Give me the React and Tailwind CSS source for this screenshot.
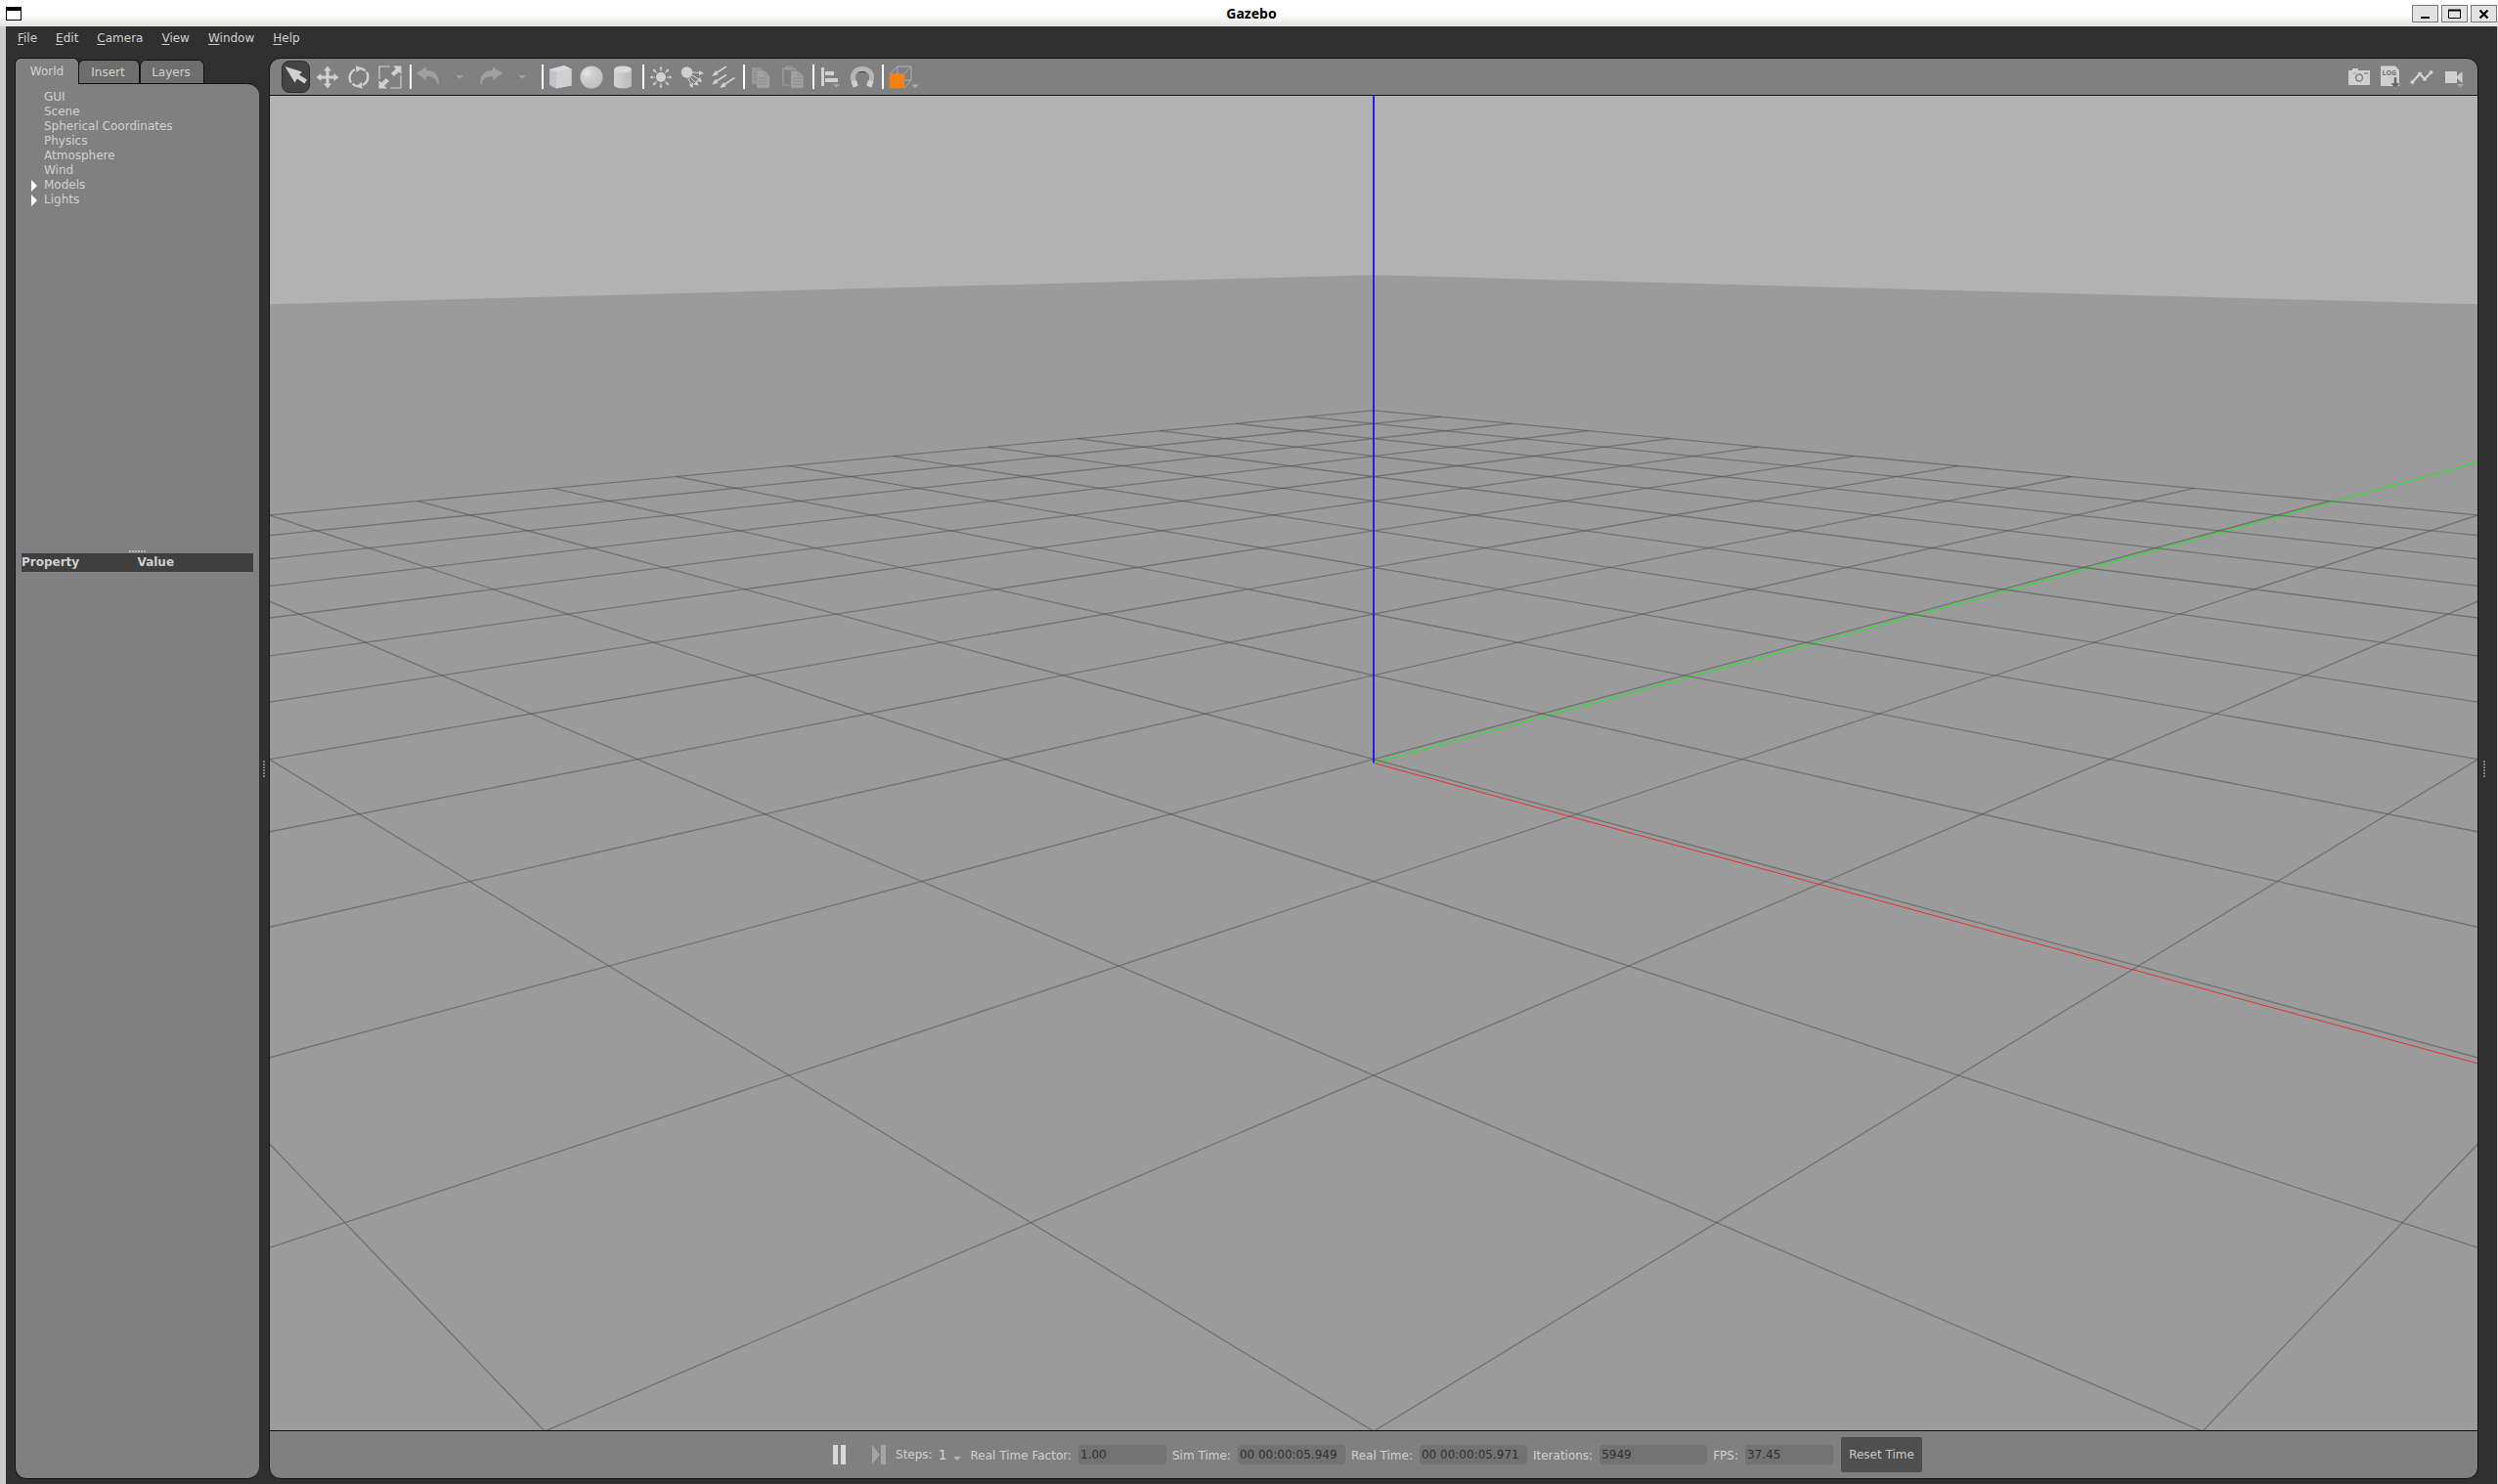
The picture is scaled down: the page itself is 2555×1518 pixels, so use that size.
import React from "react";

const W = 2258;
const H = 1365;
const EYE = { x: 5, y: -5, z: 2 };
const PITCH = 0.275643;
const FOCAL = W / 2 / Math.tan(Math.PI / 6);
const NEAR = 0.5;

function toCamera([x, y, z]) {
  const dx = x - EYE.x;
  const dy = y - EYE.y;
  const dz = z - EYE.z;
  const ahead = (-dx + dy) / Math.SQRT2;
  const right = (dx + dy) / Math.SQRT2;
  return {
    depth: ahead * Math.cos(PITCH) - dz * Math.sin(PITCH),
    right,
    up: ahead * Math.sin(PITCH) + dz * Math.cos(PITCH),
  };
}

function mix(a, b) {
  const t = (NEAR - a.depth) / (b.depth - a.depth);
  return {
    depth: NEAR,
    right: a.right + t * (b.right - a.right),
    up: a.up + t * (b.up - a.up),
  };
}

function projectLine(from, to) {
  let a = toCamera(from);
  let b = toCamera(to);
  if (a.depth < NEAR && b.depth < NEAR) return null;
  if (a.depth < NEAR) a = mix(a, b);
  else if (b.depth < NEAR) b = mix(b, a);
  const sx = (p) => W / 2 + (FOCAL * p.right) / p.depth;
  const sy = (p) => H / 2 - (FOCAL * p.up) / p.depth;
  return { x1: sx(a), y1: sy(a), x2: sx(b), y2: sy(b) };
}

const GRID = [];
for (let i = -10; i <= 10; i++) {
  GRID.push(projectLine([i, -10, 0.015], [i, 10, 0.015]));
  GRID.push(projectLine([-10, i, 0.015], [10, i, 0.015]));
}
const LINES = GRID.filter(Boolean);
const AXIS_X = projectLine([0, 0, 0], [50, 0, 0]);
const AXIS_Y = projectLine([0, 0, 0], [0, 50, 0]);
const EDGE_R = projectLine([-50, 50, 0], [50, 50, 0]);
const EDGE_L = projectLine([-50, 50, 0], [-50, -50, 0]);

function Scene() {
  return (
    <svg
      className="block h-full w-full"
      viewBox={`0 0 ${W} ${H}`}
      preserveAspectRatio="xMidYMid slice"
      role="img"
      aria-label="3D scene"
    >
      <rect width={W} height={H} fill="#b2b2b2" />
      <polygon
        fill="#9b9b9b"
        points={`${EDGE_R.x1},${EDGE_R.y1} ${EDGE_R.x2},${EDGE_R.y2} ${EDGE_R.x2},3000 ${EDGE_L.x2},3000 ${EDGE_L.x2},${EDGE_L.y2}`}
      />
      <line {...AXIS_X} stroke="#e83030" strokeWidth="1" />
      <line {...AXIS_Y} stroke="#20ea20" strokeWidth="1" />
      <g stroke="#4d4d4d" strokeOpacity="0.52" strokeWidth="1.3">
        {LINES.map((l, i) => (
          <line key={i} {...l} />
        ))}
      </g>
      <line x1={W / 2} y1="0" x2={W / 2} y2={H / 2} stroke="#2020ea" strokeWidth="2" />
    </svg>
  );
}

function Icon({ children, size = 24 }) {
  return (
    <svg width={size} height={size} viewBox="0 0 24 24" className="block shrink-0" aria-hidden="true">
      {children}
    </svg>
  );
}

function Tool({ label, children, disabled, active }) {
  return (
    <button
      type="button"
      aria-label={label}
      disabled={disabled}
      className={
        active
          ? "flex h-[33px] w-[29px] items-center justify-center rounded-lg border border-[#2c2c2c] bg-[#444444]"
          : "flex h-8 w-8 items-center justify-center"
      }
    >
      {children}
    </button>
  );
}

function Separator() {
  return <div className="mr-px ml-1 h-[25px] w-0.5 bg-white" />;
}

const L = "#d0d0d0";

function SelectIcon() {
  return (
    <Icon>
      <path d="M0.500 1L18 6.500L15 9.500L23 14.500L20.500 18.500L13 13.500L10.500 17.500Z" fill={L} />
    </Icon>
  );
}
function MoveIcon() {
  return (
    <Icon>
      <path
        d="M12 0.500L16 5.500H13.500V10.500H18.500V8L23.500 12L18.500 16V13.500H13.500V18.500H16L12 23.500L8 18.500H10.500V13.500H5.500V16L0.500 12L5.500 8V10.500H10.500V5.500H8Z"
        fill={L}
      />
    </Icon>
  );
}
function RotateIcon() {
  return (
    <Icon>
      <g fill="none" stroke={L} strokeWidth="2.200">
        <path d="M16 20A9.500 9.500 0 0 0 20 6.500" />
        <path d="M8 4A9.500 9.500 0 0 0 4 17.500" />
        <path d="M5.500 18.500A9.500 9.500 0 0 0 13 21.300" />
        <path d="M18.500 5.500A9.500 9.500 0 0 0 11 2.700" />
      </g>
      <path d="M9 0L15 3L9.500 7ZM15 17L15.500 24L9.500 21Z" fill={L} />
    </Icon>
  );
}
function ScaleIcon() {
  return (
    <Icon>
      <path d="M12 1H1V14M12 23H23V10" fill="none" stroke={L} strokeWidth="1.200" />
      <path
        d="M23.500 0.500V9L20.800 6.500L16 11L13 8L18 3.200L15 0.500ZM0.500 23.500V15L3.200 17.500L8 13L11 16L6 20.800L9 23.500Z"
        fill={L}
      />
    </Icon>
  );
}
function UndoIcon() {
  return (
    <Icon>
      <path d="M0 8L10 1.500V5C19 5 25 12 22 21C21 14 17 11 10 11V15Z" fill="#a0a0a0" />
    </Icon>
  );
}
function RedoIcon() {
  return (
    <Icon>
      <path d="M24 8L14 1.500V5C5 5 -1 12 2 21C3 14 7 11 14 11V15Z" fill="#a0a0a0" />
    </Icon>
  );
}
function Caret({ color = "#a0a0a0" }) {
  return (
    <svg width="8" height="4" viewBox="0 0 8 4" className="block" aria-hidden="true">
      <path d="M0 0H8L4 4Z" fill={color} />
    </svg>
  );
}
function BoxIcon() {
  return (
    <Icon>
      <path d="M1 4L16 0L23.500 3.500V20.500L8 23.500L1 20Z" fill="#c4c4c6" />
      <path d="M1 4L16 0L23.500 3.500L8 6.500Z" fill="#dadadb" />
      <path d="M8 6.500L23.500 3.500V20.500L8 23.500Z" fill="#cfcfd1" />
    </Icon>
  );
}
function SphereIcon() {
  return (
    <Icon>
      <defs>
        <radialGradient id="ball" cx="0.3" cy="0.3" r="0.8">
          <stop offset="0" stopColor="#e6e6e6" />
          <stop offset="0.35" stopColor="#cfcfcf" />
          <stop offset="1" stopColor="#bcbcbc" />
        </radialGradient>
      </defs>
      <circle cx="12" cy="12" r="11.500" fill="url(#ball)" />
    </Icon>
  );
}
function CylinderIcon() {
  return (
    <Icon>
      <defs>
        <linearGradient id="cyl">
          <stop offset="0" stopColor="#d4d4d4" />
          <stop offset="1" stopColor="#b9b9b9" />
        </linearGradient>
      </defs>
      <path d="M3 4V20C3 24.500 21 24.500 21 20V4Z" fill="url(#cyl)" />
      <ellipse cx="12" cy="4" rx="9" ry="3.500" fill="#dadadc" />
    </Icon>
  );
}
function PointLightIcon() {
  return (
    <Icon>
      <circle cx="12" cy="12" r="5" fill={L} />
      {[0, 45, 90, 135, 180, 225, 270, 315].map((a) => (
        <g key={a} transform={`rotate(${a} 12 12)`}>
          <path d="M12 6V3" stroke={L} strokeWidth="1" />
          <path d="M10.300 3.500H13.700L12 0.500Z" fill={L} />
        </g>
      ))}
    </Icon>
  );
}
function SpotLightIcon() {
  return (
    <Icon>
      <circle cx="6.500" cy="7" r="5.800" fill={L} />
      <path d="M10 7L20 7.500M10 9L19 14M9 11L16 18M7 11L11 20" stroke={L} strokeWidth="1" />
      <path d="M19 5L24 8L19 10ZM20 12L22 17L16.500 16ZM16.500 15.500L18.500 20.500L13.500 19.500ZM13 17.500L12.500 23L8.500 20Z" fill={L} />
    </Icon>
  );
}
function SunLightIcon() {
  return (
    <Icon>
      <path d="M15 1L4 8M15 9.500L4 16.500M23.500 12.500L12 20" stroke={L} strokeWidth="1.600" />
      <path d="M4 5L6.500 9.500L0 11ZM4 13.500L6.500 18L0 19.500ZM12 17L14.500 21.500L8 23Z" fill={L} />
    </Icon>
  );
}
function CopyIcon() {
  return (
    <Icon>
      <path d="M2 2H10L14 6V19H2Z" fill="#999999" />
      <path d="M4 8H8M4 11H8M4 14H8" stroke="#858585" />
      <path d="M7 5H15L20 10V23H7Z" fill="#a2a2a2" stroke="#8d8d8d" strokeWidth="0.600" />
      <path d="M15 5V10H20M9 13H18M9 16H18M9 19H18" fill="none" stroke="#8a8a8a" />
    </Icon>
  );
}
function PasteIcon() {
  return (
    <Icon>
      <path d="M8 20H2V3H14V6M5 1H11V4H5Z" fill="none" stroke="#a2a2a2" strokeWidth="1.200" />
      <path d="M10 5.500H17L22.500 10V23H10Z" fill="#a2a2a2" stroke="#8d8d8d" strokeWidth="0.600" />
      <path d="M17 5V10H22M12 13H21M12 16H21M12 19H21" fill="none" stroke="#8a8a8a" />
    </Icon>
  );
}
function AlignIcon() {
  return (
    <Icon>
      <path d="M2 2H5V21H2ZM6 6H15V10H6ZM6 13H19V17H6Z" fill={L} />
      <path d="M14 19H21L17.500 22.500Z" fill="#aaaaaa" />
    </Icon>
  );
}
function MagnetIcon() {
  return (
    <Icon>
      <path d="M5 21.500C-1 9 4.500 3.500 12 3.500S25 9 19 21.500" fill="none" stroke="#b6b6b6" strokeWidth="5" />
      <path d="M0.800 16.500L6 15L7.800 20.500L2.800 22.500ZM23.200 16.500L18 15L16.200 20.500L21.200 22.500Z" fill={L} />
      <path d="M8.500 7Q12 5.500 15.500 7" fill="none" stroke="#444444" strokeWidth="1" />
    </Icon>
  );
}
function CameraIcon() {
  return (
    <Icon>
      <path d="M1 5H5V3H11V5H23V20H1Z" fill={L} />
      <circle cx="12" cy="12.500" r="3.400" fill="none" stroke="#808080" strokeWidth="1.500" />
      <path d="M17 8H21" stroke="#8e8e8e" strokeWidth="1.500" />
      <path d="M6 8H9" stroke="#a0a0a0" />
    </Icon>
  );
}
function LogIcon() {
  return (
    <Icon>
      <path d="M2 0.500H17L21 5V21H2Z" fill={L} />
      <text x="3.500" y="9.500" fontSize="7" fontWeight="700" fontFamily="Open Sans, sans-serif" fill="#707070">
        LOG
      </text>
      <path d="M15.500 12H18.500V18H22L17 23.500L12 18H15.500Z" fill="#666666" stroke="#c0c0c0" strokeWidth="0.500" />
    </Icon>
  );
}
function PlotIcon() {
  return (
    <Icon>
      <path d="M2.500 17L10 8.500L15 14L21.500 7" fill="none" stroke={L} strokeWidth="2.200" />
      <circle cx="2.500" cy="17" r="2" fill={L} />
      <circle cx="10" cy="8.500" r="2" fill={L} />
      <circle cx="15" cy="14" r="2" fill={L} />
      <circle cx="21.500" cy="7" r="2" fill={L} />
    </Icon>
  );
}
function VideoIcon() {
  return (
    <Icon>
      <path d="M4 6H16V18H4Z" fill={L} />
      <path d="M16 11L21.500 6V18L16 13Z" fill={L} />
      <path d="M16 19H23L19.500 22.500Z" fill="#aaaaaa" />
    </Icon>
  );
}

const MENUS = ["File", "Edit", "Camera", "View", "Window", "Help"];
const TREE = ["GUI", "Scene", "Spherical Coordinates", "Physics", "Atmosphere", "Wind", "Models", "Lights"];

function TitleBar() {
  return (
    <header className="grid h-[27px] shrink-0 grid-cols-[1fr_auto_1fr] items-center bg-linear-to-b from-white from-55% to-[#e2e2e0] pr-px pl-1.5">
      <div className="h-3.5 w-4 border border-t-4 border-black bg-white" />
      <h1 className="font-['Noto_Sans',sans-serif] text-sm font-bold text-black">Gazebo</h1>
      <div className="flex justify-end gap-[3px]">
        <button type="button" aria-label="Minimize" className="flex h-[18px] w-[27px] justify-center border border-[#777777] bg-[#e2e2e2]">
          <svg width="25" height="16" viewBox="0 0 25 16" aria-hidden="true">
            <path d="M8 12H17" stroke="#000" strokeWidth="2" />
          </svg>
        </button>
        <button type="button" aria-label="Maximize" className="flex h-[18px] w-[27px] justify-center border border-[#777777] bg-[#e2e2e2]">
          <svg width="25" height="16" viewBox="0 0 25 16" aria-hidden="true">
            <path d="M6.500 4V12.500H18.500V4" fill="none" stroke="#000" />
            <path d="M6 4.500H19" stroke="#000" strokeWidth="2" />
          </svg>
        </button>
        <button type="button" aria-label="Close" className="flex h-[18px] w-[27px] justify-center border border-[#777777] bg-[#e2e2e2]">
          <svg width="25" height="16" viewBox="0 0 25 16" aria-hidden="true">
            <path d="M8.500 4.500L16.500 12.500M16.500 4.500L8.500 12.500" stroke="#000" strokeWidth="2.200" />
          </svg>
        </button>
      </div>
    </header>
  );
}

function SidePanel() {
  return (
    <aside className="flex w-[250px] shrink-0 flex-col">
      <div className="flex h-[26px] items-end" role="tablist">
        <button type="button" role="tab" aria-selected="true" className="relative z-10 -mb-px h-[27px] w-[66px] rounded-t-md border border-b-0 border-[#111111] bg-[#808080] text-center">
          World
        </button>
        <button type="button" role="tab" aria-selected="false" className="-ml-px h-6 w-[63px] rounded-t-md border border-b-0 border-[#111111] bg-[#6e6e6e] pr-0.5">
          Insert
        </button>
        <button type="button" role="tab" aria-selected="false" className="h-6 w-[66px] rounded-t-md border border-b-0 border-[#111111] bg-[#6e6e6e] pr-0.5">
          Layers
        </button>
      </div>
      <div className="flex min-h-0 flex-1 flex-col rounded-tr-xl rounded-b-xl border border-r-0 border-[#111111] bg-[#808080]">
        <div className="flex-1 basis-0">
          <ul className="pt-1.5" role="tree">
            {TREE.map((name, i) => (
              <li key={name} role="treeitem" className="flex h-[15px] items-center pl-4 leading-[15px]">
                <span className="w-[13px]">
                  {i > 5 && (
                    <svg width="6" height="12" viewBox="0 0 6 12" className="block" aria-hidden="true">
                      <path d="M0 0L6 6L0 12Z" fill="#fff" />
                    </svg>
                  )}
                </span>
                {name}
              </li>
            ))}
          </ul>
        </div>
        <div className="flex grow-2 basis-0 flex-col px-1.5">
          <div className="flex h-[5px] items-center justify-center gap-px">
            {[0, 1, 2, 3, 4, 5].map((n) => (
              <span key={n} className="h-0.5 w-0.5 bg-[#b4b4b4]" />
            ))}
          </div>
          <table className="w-full table-fixed bg-[#3f3f3f] text-left leading-[19px]">
            <thead>
              <tr>
                <th className="w-1/2 font-bold">Property</th>
                <th className="font-bold">Value</th>
              </tr>
            </thead>
          </table>
        </div>
      </div>
    </aside>
  );
}

function Toolbar() {
  return (
    <div className="flex h-[37px] shrink-0 items-center justify-between pr-[9px] pl-3">
      <div className="flex items-center">
        <Tool label="Selection mode" active><SelectIcon /></Tool>
        <div className="ml-0.5 flex">
          <Tool label="Translation mode"><MoveIcon /></Tool>
          <Tool label="Rotation mode"><RotateIcon /></Tool>
          <Tool label="Scale mode"><ScaleIcon /></Tool>
        </div>
        <Separator />
        <Tool label="Undo" disabled><UndoIcon /></Tool>
        <Tool label="Undo history" disabled><Caret /></Tool>
        <Tool label="Redo" disabled><RedoIcon /></Tool>
        <Tool label="Redo history" disabled><Caret /></Tool>
        <Separator />
        <Tool label="Box"><BoxIcon /></Tool>
        <Tool label="Sphere"><SphereIcon /></Tool>
        <Tool label="Cylinder"><CylinderIcon /></Tool>
        <Separator />
        <Tool label="Point light"><PointLightIcon /></Tool>
        <Tool label="Spot light"><SpotLightIcon /></Tool>
        <Tool label="Directional light"><SunLightIcon /></Tool>
        <Separator />
        <Tool label="Copy" disabled><CopyIcon /></Tool>
        <Tool label="Paste" disabled><PasteIcon /></Tool>
        <Separator />
        <Tool label="Align"><AlignIcon /></Tool>
        <Tool label="Snap"><MagnetIcon /></Tool>
        <Separator />
        <button type="button" aria-label="View angle" className="ml-1">
          <svg width="32" height="24" viewBox="0 0 32 24" className="block" aria-hidden="true">
            <path d="M1 8.500L9 1H23V15L16 23M9 1V15H23M9 15L1 23M16 8.500L23 1" fill="none" stroke="#b0b0b0" />
            <path d="M1 8.500H16V23H1Z" fill="#f8800f" stroke="#c89058" strokeWidth="0.500" />
            <path d="M23 19.500H31L27 23Z" fill="#aaaaaa" />
          </svg>
        </button>
      </div>
      <div className="flex">
        <Tool label="Screenshot"><CameraIcon /></Tool>
        <Tool label="Log data"><LogIcon /></Tool>
        <Tool label="Plot"><PlotIcon /></Tool>
        <Tool label="Record video"><VideoIcon /></Tool>
      </div>
    </div>
  );
}

function Field({ id, label, value, wide }) {
  return (
    <div className="flex items-center gap-[7px]">
      <label htmlFor={id} className="pt-0.5">{label}</label>
      <input
        id={id}
        readOnly
        defaultValue={value}
        className={
          wide
            ? "h-5 w-[110px] rounded-sm bg-[#727272] px-0.5 text-[#303030] outline-none"
            : "h-5 w-[90px] rounded-sm bg-[#727272] px-0.5 text-[#303030] outline-none"
        }
      />
    </div>
  );
}

function StatusBar() {
  return (
    <footer className="flex h-12 shrink-0 items-center justify-center gap-1.5 pb-px pl-2">
      <button type="button" aria-label="Pause" className="mr-5">
        <svg width="14" height="20" viewBox="0 0 14 20" className="block" aria-hidden="true">
          <path d="M0 0H5V20H0ZM8 0H13V20H8Z" fill="#d8d8d8" />
        </svg>
      </button>
      <button type="button" aria-label="Step" className="mr-1">
        <svg width="14" height="20" viewBox="0 0 14 20" className="block" aria-hidden="true">
          <path d="M0 0L8 10L0 20ZM9 0H14V20H9Z" fill="#a4a4a4" />
        </svg>
      </button>
      <div className="mr-1 flex items-center">
        <span>Steps:</span>
        <button type="button" aria-label="Step count" className="ml-1.5 flex items-center gap-1.5">
          <span className="text-sm">1</span>
          <span className="pt-2"><Caret color="#b4b4b4" /></span>
        </button>
      </div>
      <Field id="rtf" label="Real Time Factor:" value="1.00" />
      <Field id="sim" label="Sim Time:" value="00 00:00:05.949" wide />
      <Field id="real" label="Real Time:" value="00 00:00:05.971" wide />
      <Field id="iter" label="Iterations:" value="5949" wide />
      <Field id="fps" label="FPS:" value="37.45" />
      <button type="button" className="ml-0.5 h-9 w-[83px] rounded-xs bg-[#4f4f4f] text-[#c8c8c8]">
        Reset Time
      </button>
    </footer>
  );
}

function Grip() {
  return (
    <div className="flex flex-col gap-px">
      {[0, 1, 2, 3, 4, 5].map((n) => (
        <span key={n} className="h-0.5 w-0.5 bg-[#7c7c7c]" />
      ))}
    </div>
  );
}

export default function App() {
  return (
    <div className="flex h-screen flex-col bg-[#cccccc] font-['DejaVu_Sans',sans-serif] text-[12px] text-[#d0d0d0]">
      <TitleBar />
      <div className="mr-px ml-1.5 flex min-h-0 flex-1 flex-col bg-[#303030]">
        <nav className="flex h-8 shrink-0 gap-[19px] px-3 pt-1">
          {MENUS.map((m) => (
            <button key={m} type="button" className="h-4 leading-4">
              <span className="underline underline-offset-2">{m[0]}</span>
              {m.slice(1)}
            </button>
          ))}
        </nav>
        <div className="flex min-h-0 flex-1 pb-[5px] pl-[9px]">
          <SidePanel />
          <div className="flex w-2.5 shrink-0 items-center justify-center"><Grip /></div>
          <main className="flex min-w-0 flex-1 flex-col overflow-hidden rounded-xl border border-[#111111] bg-[#808080]">
            <Toolbar />
            <div className="min-h-0 flex-1 border-y border-[#111111]">
              <Scene />
            </div>
            <StatusBar />
          </main>
          <div className="flex w-[19px] shrink-0 items-center pl-[5px]"><Grip /></div>
        </div>
      </div>
    </div>
  );
}
